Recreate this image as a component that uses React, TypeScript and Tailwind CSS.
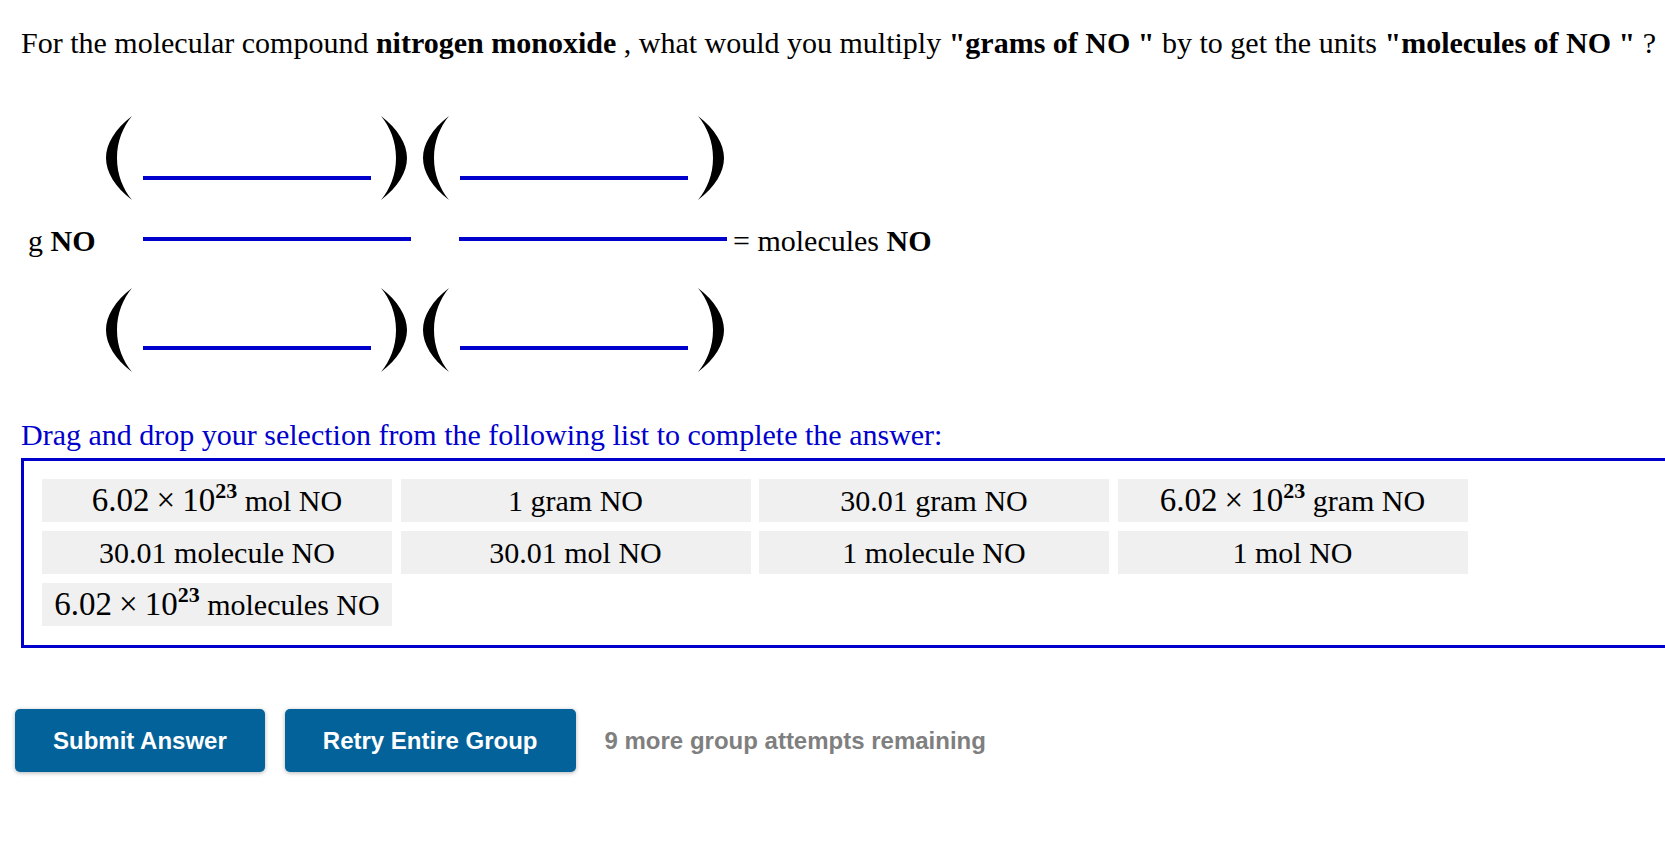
import React from "react";

function Paren({ right = false }: { right?: boolean }) {
  return (
    <svg
      width="28"
      height="88"
      viewBox="0 0 28 88"
      className={right ? "-scale-x-100 shrink-0" : "shrink-0"}
    >
      <path
        d="M27 2 C10 15 1 30 1 44 C1 58 10 73 27 86 C18 75 12 61 12 44 C12 27 18 13 27 2 Z"
        fill="#000"
      />
    </svg>
  );
}

function Fraction({ barOffset }: { barOffset: string }) {
  return (
    <div className="flex flex-col">
      <div className="flex items-end h-[88px]">
        <Paren />
        <div className="ml-[10px] mb-[22px] w-[228px] h-[4px] bg-[#0000cc]" />
        <div className="ml-[9px]">
          <Paren right />
        </div>
      </div>
      <div className={`mt-[35px] w-[268px] h-[4px] bg-[#0000cc] ${barOffset}`} />
      <div className="mt-[45px] flex items-end h-[88px]">
        <Paren />
        <div className="ml-[10px] mb-[24px] w-[228px] h-[4px] bg-[#0000cc]" />
        <div className="ml-[9px]">
          <Paren right />
        </div>
      </div>
    </div>
  );
}

function Sci({ unit }: { unit: string }) {
  return (
    <span>
      <span className="text-[33px]">
        6.02<span className="mx-[7px]">×</span>10
      </span>
      <sup className="text-[22px] font-bold relative -top-[13px] align-baseline">23</sup>{" "}
      <span>{unit}</span> <span>NO</span>
    </span>
  );
}

const tiles: React.ReactNode[] = [
  <Sci unit="mol" />,
  <span>1 gram NO</span>,
  <span>30.01 gram NO</span>,
  <Sci unit="gram" />,
  <span>30.01 molecule NO</span>,
  <span>30.01 mol NO</span>,
  <span>1 molecule NO</span>,
  <span>1 mol NO</span>,
  <Sci unit="molecules" />,
];

export default function App() {
  return (
    <div className="min-h-screen bg-white text-black font-['Liberation_Serif',serif] overflow-hidden">
      <div className="pt-[26px] pl-[21px]">
        <p className="text-[30px] leading-[34px] whitespace-nowrap">
          For the molecular compound <b>nitrogen monoxide</b> , what would you multiply{" "}
          <b>"grams of NO "</b> by to get the units <b>"molecules of NO "</b> ?
        </p>

        <div className="mt-[54px] flex items-center text-[30px] leading-[34px]">
          <div className="w-[84px] pl-[7px] -mt-[6px]">
            g <b>NO</b>
          </div>
          <Fraction barOffset="ml-[38px]" />
          <div className="ml-[11px]">
            <Fraction barOffset="ml-[37px]" />
          </div>
          <div className="ml-[6px] -mt-[6px] whitespace-nowrap">
            = molecules <b>NO</b>
          </div>
        </div>

        <p className="mt-[44px] text-[30px] leading-[34px] text-[#0000cc] whitespace-nowrap">
          Drag and drop your selection from the following list to complete the answer:
        </p>

        <div className="mt-[6px] border-[3px] border-r-0 border-[#0000cc] pt-[18px] pl-[18px] pb-[19px]">
          <div className="grid grid-cols-[repeat(4,350px)] gap-x-[8.5px] gap-y-[9px]">
            {tiles.map((t, i) => (
              <div
                key={i}
                className="h-[43px] bg-[#f0f0f0] flex items-center justify-center text-[30px] leading-none whitespace-nowrap"
              >
                {t}
              </div>
            ))}
          </div>
        </div>
      </div>

      <div className="mt-[61px] pl-[15px] flex items-center font-['Liberation_Sans',Arial,sans-serif] font-bold text-[24px]">
        <button className="h-[63px] px-[38px] rounded-[5px] bg-[#03629a] text-white shadow-[0_1px_4px_rgba(0,0,0,0.3)]">
          Submit Answer
        </button>
        <button className="ml-[20px] h-[63px] px-[38px] rounded-[5px] bg-[#03629a] text-white shadow-[0_1px_4px_rgba(0,0,0,0.3)]">
          Retry Entire Group
        </button>
        <span className="ml-[29px] text-[#7f7f7f]">9 more group attempts remaining</span>
      </div>
    </div>
  );
}
